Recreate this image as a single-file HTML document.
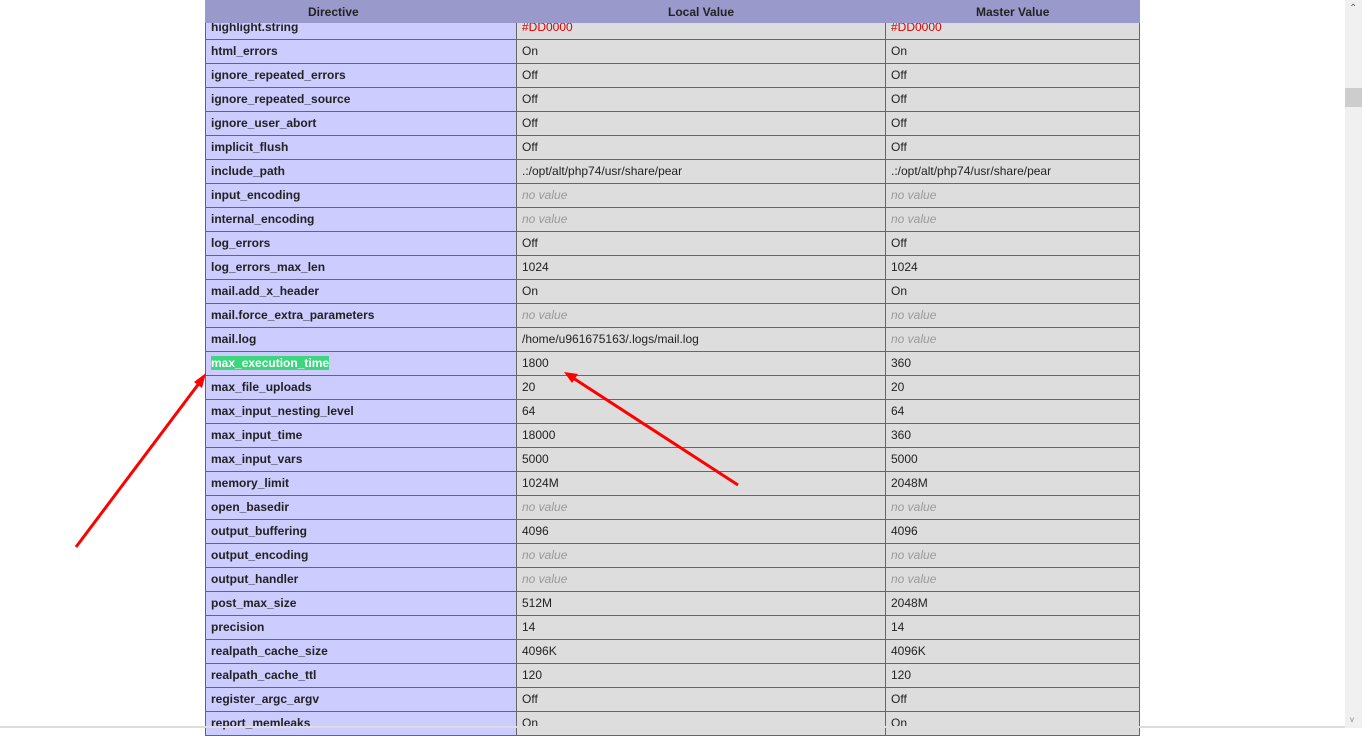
<!DOCTYPE html>
<html><head><meta charset="utf-8"><style>
body{margin:0;width:1362px;height:728px;overflow:hidden;background:#fff;font-family:"Liberation Sans",Arial,sans-serif;font-size:12px;color:#222;position:relative}
table{position:absolute;left:205px;top:15px;border-collapse:collapse;width:935px}
td{border:1px solid #666;height:24px;padding:0 0 2px 5px;box-sizing:border-box;vertical-align:middle;background:#ddd}
td.e{background:#ccf;font-weight:bold;width:311px}
td.v1{width:369px}
i{color:#999}
.hdr{position:absolute;left:205px;top:0;width:935px;height:23px;background:#99c;font-weight:bold;font-size:12px}
.hdr span{position:absolute;top:5px}
.sb{position:absolute;right:0;top:0;width:17px;height:728px;background:#f0f0f0}
.hl{background:#3dd67f;color:#fff}
</style></head><body>
<table>
<tr><td class="e">highlight.string</td><td class="v1" style="color:#d00">#DD0000</td><td style="color:#d00">#DD0000</td></tr>
<tr><td class="e">html_errors</td><td>On</td><td>On</td></tr>
<tr><td class="e">ignore_repeated_errors</td><td>Off</td><td>Off</td></tr>
<tr><td class="e">ignore_repeated_source</td><td>Off</td><td>Off</td></tr>
<tr><td class="e">ignore_user_abort</td><td>Off</td><td>Off</td></tr>
<tr><td class="e">implicit_flush</td><td>Off</td><td>Off</td></tr>
<tr><td class="e">include_path</td><td>.:/opt/alt/php74/usr/share/pear</td><td>.:/opt/alt/php74/usr/share/pear</td></tr>
<tr><td class="e">input_encoding</td><td><i>no value</i></td><td><i>no value</i></td></tr>
<tr><td class="e">internal_encoding</td><td><i>no value</i></td><td><i>no value</i></td></tr>
<tr><td class="e">log_errors</td><td>Off</td><td>Off</td></tr>
<tr><td class="e">log_errors_max_len</td><td>1024</td><td>1024</td></tr>
<tr><td class="e">mail.add_x_header</td><td>On</td><td>On</td></tr>
<tr><td class="e">mail.force_extra_parameters</td><td><i>no value</i></td><td><i>no value</i></td></tr>
<tr><td class="e">mail.log</td><td>/home/u961675163/.logs/mail.log</td><td><i>no value</i></td></tr>
<tr><td class="e"><span class="hl">max_execution_time</span></td><td>1800</td><td>360</td></tr>
<tr><td class="e">max_file_uploads</td><td>20</td><td>20</td></tr>
<tr><td class="e">max_input_nesting_level</td><td>64</td><td>64</td></tr>
<tr><td class="e">max_input_time</td><td>18000</td><td>360</td></tr>
<tr><td class="e">max_input_vars</td><td>5000</td><td>5000</td></tr>
<tr><td class="e">memory_limit</td><td>1024M</td><td>2048M</td></tr>
<tr><td class="e">open_basedir</td><td><i>no value</i></td><td><i>no value</i></td></tr>
<tr><td class="e">output_buffering</td><td>4096</td><td>4096</td></tr>
<tr><td class="e">output_encoding</td><td><i>no value</i></td><td><i>no value</i></td></tr>
<tr><td class="e">output_handler</td><td><i>no value</i></td><td><i>no value</i></td></tr>
<tr><td class="e">post_max_size</td><td>512M</td><td>2048M</td></tr>
<tr><td class="e">precision</td><td>14</td><td>14</td></tr>
<tr><td class="e">realpath_cache_size</td><td>4096K</td><td>4096K</td></tr>
<tr><td class="e">realpath_cache_ttl</td><td>120</td><td>120</td></tr>
<tr><td class="e">register_argc_argv</td><td>Off</td><td>Off</td></tr>
<tr><td class="e">report_memleaks</td><td>On</td><td>On</td></tr>
</table>
<div class="hdr"><span style="left:103px">Directive</span><span style="left:463px">Local Value</span><span style="left:771px">Master Value</span></div>
<svg style="position:absolute;left:0;top:0" width="1362" height="728">
<g stroke="#f00" stroke-width="3" fill="none"><line x1="76" y1="547" x2="203" y2="378"/><line x1="738" y1="485" x2="570" y2="376"/></g>
<polygon points="206,373 194,382 202,388" fill="#f00"/>
<polygon points="564,372 578,374 572,383" fill="#f00"/>
</svg>
<div class="sb"><div style="position:absolute;top:3px;left:4px;color:#666;font-size:10px">&#8963;</div><div style="position:absolute;top:88px;left:0;width:17px;height:19px;background:#cdcdcd"></div><div style="position:absolute;bottom:4px;left:5px;color:#888;font-size:8px">v</div></div>
<div style="position:absolute;left:0;bottom:0;width:1345px;height:2px;background:#ddd"></div>
</body></html>
